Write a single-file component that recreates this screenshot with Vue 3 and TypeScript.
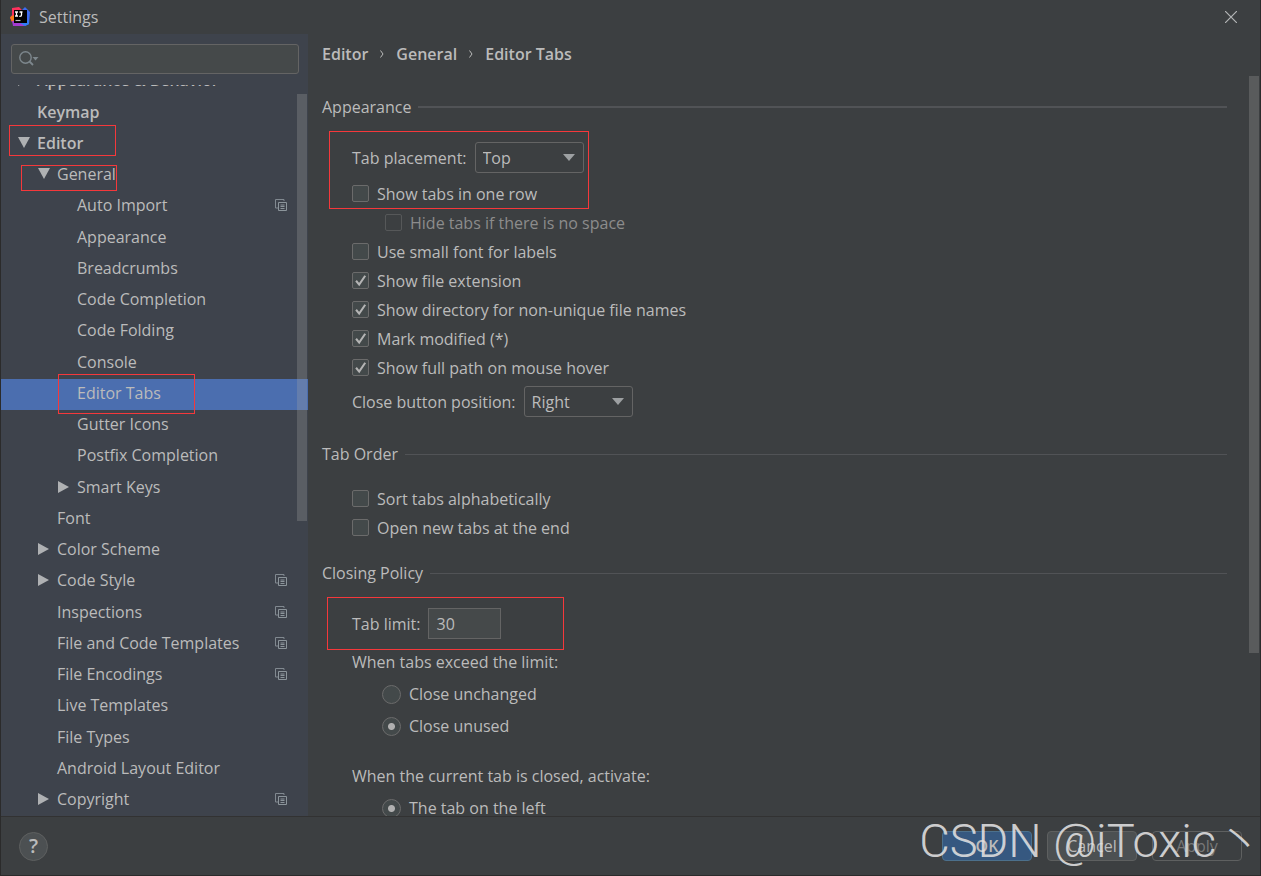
<script setup lang="ts">
import { ref } from 'vue'

interface TreeItem {
  label: string
  level: number
  state?: 'open' | 'closed'
  bold?: boolean
  project?: boolean
}

const tree: TreeItem[] = [
  { label: 'Appearance & Behavior', level: 0, state: 'closed', bold: true },
  { label: 'Keymap', level: 0, bold: true },
  { label: 'Editor', level: 0, state: 'open', bold: true },
  { label: 'General', level: 1, state: 'open' },
  { label: 'Auto Import', level: 2, project: true },
  { label: 'Appearance', level: 2 },
  { label: 'Breadcrumbs', level: 2 },
  { label: 'Code Completion', level: 2 },
  { label: 'Code Folding', level: 2 },
  { label: 'Console', level: 2 },
  { label: 'Editor Tabs', level: 2 },
  { label: 'Gutter Icons', level: 2 },
  { label: 'Postfix Completion', level: 2 },
  { label: 'Smart Keys', level: 2, state: 'closed' },
  { label: 'Font', level: 1 },
  { label: 'Color Scheme', level: 1, state: 'closed' },
  { label: 'Code Style', level: 1, state: 'closed', project: true },
  { label: 'Inspections', level: 1, project: true },
  { label: 'File and Code Templates', level: 1, project: true },
  { label: 'File Encodings', level: 1, project: true },
  { label: 'Live Templates', level: 1 },
  { label: 'File Types', level: 1 },
  { label: 'Android Layout Editor', level: 1 },
  { label: 'Copyright', level: 1, state: 'closed', project: true },
]

const selected = ref('Editor Tabs')
const query = ref('')
const placement = ref('Top')
const closePosition = ref('Right')
const tabLimit = ref('30')
const exceed = ref('unused')
const activate = ref('left')

const appearance = ref([
  { label: 'Show tabs in one row', checked: false, disabled: false },
  { label: 'Hide tabs if there is no space', checked: false, disabled: true },
  { label: 'Use small font for labels', checked: false, disabled: false },
  { label: 'Show file extension', checked: true, disabled: false },
  { label: 'Show directory for non-unique file names', checked: true, disabled: false },
  { label: 'Mark modified (*)', checked: true, disabled: false },
  { label: 'Show full path on mouse hover', checked: true, disabled: false },
])

const order = ref([
  { label: 'Sort tabs alphabetically', checked: false },
  { label: 'Open new tabs at the end', checked: false },
])
</script>

<template>
  <div class="window">
    <header class="titlebar">
      <svg class="logo" viewBox="0 0 20 20" aria-hidden="true">
        <path d="M2 1 9 0 14 5 7 14 2 15 0 11 2 8Z" fill="#fe315d" />
        <path d="M0 10 4 8 6 13 2 15Z" fill="#f97a12" />
        <path d="M12 3 15 0 20 5 19 17 15 19 9 16Z" fill="#3b6bf0" />
        <path d="M2 14 8 13 17 17 14 19 3 19Z" fill="#a33bd0" />
        <path d="M10 16 18 13 19 17 15 19Z" fill="#2f7df5" />
        <rect x="4" y="3" width="13" height="13" fill="#000" />
        <path d="M5 5h3M6.500 5v4M5 9h3M9.500 5h3M11.500 5v3q0 1.300-1.500 1.300h-.7" fill="none" stroke="#fff" stroke-width="1.300" />
        <path d="M5.500 13.500h5" stroke="#bbb" stroke-width="1.200" />
      </svg>
      <h1>Settings</h1>
      <button class="close" type="button" aria-label="Close">
        <svg viewBox="0 0 12 12"><path d="M0 0 12 12M12 0 0 12" stroke="#b4b6b7" stroke-width="1.200" /></svg>
      </button>
    </header>

    <div class="body">
      <aside class="sidebar">
        <div class="search">
          <svg viewBox="0 0 22 18" aria-hidden="true">
            <circle cx="7.500" cy="7.500" r="5.700" fill="none" stroke="#7d878d" stroke-width="1.400" />
            <path d="m11.500 11.500 3.500 3.500" stroke="#7d878d" stroke-width="1.800" />
            <path d="M14.500 7h6l-3 3.500Z" fill="#7d878d" />
          </svg>
          <input v-model="query" type="text" aria-label="Search settings" />
        </div>
        <nav class="tree" aria-label="Settings">
          <ul>
            <li
              v-for="item in tree"
              :key="item.label + item.level"
              :class="['level-' + item.level, { bold: item.bold, selected: item.label === selected }]"
            >
              <button type="button" @click="selected = item.label">
                <svg class="arrow" viewBox="0 0 12 12" aria-hidden="true">
                  <path v-if="item.state === 'open'" d="M0 0h12L6 11Z" fill="#afb1b3" />
                  <path v-else-if="item.state === 'closed'" d="M0 0v12l11-6Z" fill="#afb1b3" />
                </svg>
                <span>{{ item.label }}</span>
                <svg v-if="item.project" class="project" viewBox="0 0 12 12" aria-hidden="true">
                  <path d="M9 2V.5H.5V9H3" fill="none" stroke="#818990" />
                  <path d="M3.500 3.500h8v8h-8ZM5.500 6h4M5.500 7.500h4M5.500 9.500h4" fill="none" stroke="#8c959b" />
                </svg>
              </button>
            </li>
          </ul>
          <i class="thumb"></i>
        </nav>
      </aside>

      <main class="content">
        <nav class="crumbs" aria-label="Breadcrumb">
          <a href="#editor">Editor</a>
          <svg viewBox="0 0 4 8" aria-hidden="true"><path d="m.5.5 2.500 3.500L.5 7.500" /></svg>
          <a href="#general">General</a>
          <svg viewBox="0 0 4 8" aria-hidden="true"><path d="m.5.5 2.500 3.500L.5 7.500" /></svg>
          <a href="#editor-tabs">Editor Tabs</a>
        </nav>

        <section class="appearance">
          <h2>Appearance</h2>
          <div class="field">
            <label for="placement">Tab placement:</label>
            <div class="combo">
              <select id="placement" v-model="placement">
                <option>Top</option>
                <option>Bottom</option>
                <option>Left</option>
                <option>Right</option>
              </select>
              <svg viewBox="0 0 12 7" aria-hidden="true"><path d="M0 0h12L6 7Z" fill="#9da0a2" /></svg>
            </div>
          </div>
          <div class="checks">
            <label v-for="option in appearance" :key="option.label" class="check" :class="{ disabled: option.disabled }">
              <input v-model="option.checked" type="checkbox" :disabled="option.disabled" />
              <svg v-if="option.checked" viewBox="0 0 18 18" aria-hidden="true"><path d="m4.300 9.300 3.300 4L14 4" /></svg>
              <span>{{ option.label }}</span>
            </label>
          </div>
          <div class="field">
            <label for="close-position">Close button position:</label>
            <div class="combo">
              <select id="close-position" v-model="closePosition">
                <option>Right</option>
                <option>Left</option>
                <option>None</option>
              </select>
              <svg viewBox="0 0 12 7" aria-hidden="true"><path d="M0 0h12L6 7Z" fill="#9da0a2" /></svg>
            </div>
          </div>
        </section>

        <section class="order">
          <h2>Tab Order</h2>
          <div class="checks">
            <label v-for="option in order" :key="option.label" class="check">
              <input v-model="option.checked" type="checkbox" />
              <svg v-if="option.checked" viewBox="0 0 18 18" aria-hidden="true"><path d="m4.300 9.300 3.300 4L14 4" /></svg>
              <span>{{ option.label }}</span>
            </label>
          </div>
        </section>

        <section class="closing">
          <h2>Closing Policy</h2>
          <div class="field">
            <label for="limit">Tab limit:</label>
            <input id="limit" v-model="tabLimit" class="limit" type="text" />
          </div>
          <fieldset>
            <legend>When tabs exceed the limit:</legend>
            <label class="radio"><input v-model="exceed" type="radio" name="exceed" value="unchanged" />Close unchanged</label>
            <label class="radio"><input v-model="exceed" type="radio" name="exceed" value="unused" />Close unused</label>
          </fieldset>
          <fieldset>
            <legend>When the current tab is closed, activate:</legend>
            <label class="radio"><input v-model="activate" type="radio" name="activate" value="left" />The tab on the left</label>
          </fieldset>
        </section>
        <i class="thumb"></i>
      </main>
    </div>

    <footer class="footer">
      <button class="help" type="button" aria-label="Help">?</button>
      <button class="action primary" type="button">OK</button>
      <button class="action" type="button">Cancel</button>
      <button class="action inactive" type="button" disabled>Apply</button>
    </footer>

    <i class="mark mark-editor"></i>
    <i class="mark mark-general"></i>
    <i class="mark mark-tabs"></i>
    <i class="mark mark-placement"></i>
    <i class="mark mark-limit"></i>
    <div class="watermark">CSDN @iToxic丶</div>
  </div>
</template>

<style>
body {
  margin: 0;
  background: #3c3f41;
}
</style>

<style scoped>
* {
  box-sizing: border-box;
}

.window {
  position: relative;
  display: flex;
  flex-direction: column;
  height: 100vh;
  overflow: hidden;
  border: solid #2b2b2b;
  border-width: 0 1px 1px;
  background: #3c3f41;
  color: #bbb;
  font: 16px/20px "Open Sans", "Noto Sans", sans-serif;
}

button,
input,
select {
  margin: 0;
  padding: 0;
  border: 0;
  background: none;
  color: inherit;
  font: inherit;
}

.titlebar {
  display: flex;
  flex: none;
  align-items: center;
  height: 34px;
  padding: 0 23px 0 9px;
}

.logo {
  width: 20px;
  height: 20px;
}

h1 {
  flex: 1;
  margin: 0 0 0 9px;
  font-size: 16px;
  font-weight: 400;
}

.close {
  display: flex;
  padding: 0;
}

.close svg {
  width: 12px;
  height: 12px;
}

.body {
  display: flex;
  flex: 1;
  min-height: 0;
}

.sidebar {
  display: flex;
  flex: none;
  flex-direction: column;
  width: 307px;
  background: #3e434c;
}

.search {
  display: flex;
  flex: none;
  align-items: center;
  height: 30px;
  margin: 10px 9px 11px 10px;
  padding-left: 6px;
  border: 1px solid #646464;
  border-radius: 3px;
  background: #45494a;
}

.search svg {
  width: 22px;
  height: 18px;
}

.search input {
  flex: 1;
  outline: none;
}

.tree {
  position: relative;
  flex: 1;
  min-height: 0;
  overflow: hidden;
}

ul {
  margin: -19px 0 0;
  padding: 0;
  list-style: none;
}

li {
  height: 31px;
}

li:nth-child(4n + 1) {
  height: 32px;
}

li button {
  display: flex;
  align-items: center;
  width: 100%;
  height: 31px;
  padding: 0 21px 3px 17px;
  text-align: left;
}

.level-1 button {
  padding-left: 37px;
}

.level-2 button {
  padding-left: 57px;
}

li span {
  flex: 1;
  margin-left: 7px;
  white-space: nowrap;
}

.bold {
  font-weight: 600;
}

.selected {
  background: #4b6eaf;
}

.arrow,
.project {
  flex: none;
  width: 12px;
  height: 12px;
}

.thumb {
  position: absolute;
  top: 9px;
  right: 1px;
  width: 10px;
  height: 427px;
  background: rgba(166, 166, 166, 0.28);
}

.content {
  position: relative;
  flex: 1;
  min-width: 0;
  overflow: hidden;
  padding: 0 33px 0 14px;
}

.content .thumb {
  top: 42px;
  height: 577px;
}

.crumbs {
  display: flex;
  align-items: center;
  height: 40px;
  font-weight: 600;
}

.crumbs a {
  color: inherit;
  text-decoration: none;
}

.crumbs svg {
  width: 4px;
  height: 8px;
  margin: 0 12px;
  fill: none;
  stroke: #bbb;
}

section {
  margin-top: 18px;
}

h2 {
  display: flex;
  align-items: center;
  height: 30px;
  margin: 0;
  font-size: 16px;
  font-weight: 400;
}

h2::after {
  content: "";
  flex: 1;
  height: 1px;
  margin-left: 7px;
  background: #515356;
}

.appearance h2::after {
  height: 2px;
}

.field {
  display: flex;
  align-items: center;
  gap: 8px;
  height: 31px;
  padding-left: 30px;
}

h2 + .field {
  margin-top: 20px;
}

.combo {
  position: relative;
}

select {
  appearance: none;
  display: block;
  width: 109px;
  height: 31px;
  padding-left: 7px;
  border: 1px solid #646464;
  border-radius: 3px;
}

.combo svg {
  position: absolute;
  top: 12px;
  right: 9px;
  width: 12px;
  height: 7px;
  pointer-events: none;
}

.checks {
  padding: 6px 0 4px 30px;
}

.check {
  position: relative;
  display: flex;
  align-items: center;
  gap: 8px;
  height: 29px;
}

.check.disabled {
  margin-left: 33px;
  color: #8c8c8c;
}

.check input {
  appearance: none;
  width: 17px;
  height: 17px;
  border: 1px solid #6b6b6b;
  border-radius: 2px;
  background: #43494a;
}

.check.disabled input {
  border-color: #565859;
  background: none;
}

.check svg {
  position: absolute;
  left: 0;
  width: 17px;
  height: 17px;
  fill: none;
  stroke: #b4b4b4;
  stroke-width: 2.2;
  pointer-events: none;
}

.order {
  margin-top: 22px;
}

.order .checks {
  padding-top: 15px;
  padding-bottom: 0;
}

.closing {
  margin-top: 16px;
}

.limit {
  width: 73px;
  height: 31px;
  padding-left: 7px;
  border: 1px solid #646464;
  background: #45494a;
}

fieldset {
  margin: 7px 0 18px;
  padding: 0 0 0 30px;
  border: 0;
}

legend {
  padding: 0;
  line-height: 32px;
}

.radio {
  display: flex;
  align-items: center;
  gap: 8px;
  height: 32px;
  padding-left: 30px;
}

.radio input {
  appearance: none;
  width: 19px;
  height: 19px;
  border: 1px solid #6b6b6b;
  border-radius: 50%;
  background: #43494a;
}

.radio input:checked {
  background: radial-gradient(circle, #b0b0b0 3px, #43494a 4px);
}

.footer {
  display: flex;
  flex: none;
  align-items: center;
  gap: 15px;
  height: 59px;
  padding: 0 18px;
  border-top: 1px solid #323232;
}

.help {
  width: 29px;
  height: 29px;
  margin-right: auto;
  border: 1px solid #5e6060;
  border-radius: 50%;
  background: #4c5052;
  font-size: 20px;
  font-weight: 600;
}

.action {
  width: 90px;
  height: 30px;
  border: 1px solid #5e6060;
  border-radius: 4px;
  background: #4c5052;
}

.primary {
  border-color: #4c708c;
  background: #365880;
  font-weight: 600;
}

.inactive {
  background: none;
  color: #777;
}

.mark {
  position: absolute;
  border: 1px solid #f5383b;
  pointer-events: none;
}

.mark-editor {
  left: 8px;
  top: 125px;
  width: 107px;
  height: 31px;
}

.mark-general {
  left: 20px;
  top: 165px;
  width: 96px;
  height: 26px;
}

.mark-tabs {
  left: 57px;
  top: 374px;
  width: 137px;
  height: 40px;
}

.mark-placement {
  left: 328px;
  top: 131px;
  width: 260px;
  height: 78px;
}

.mark-limit {
  left: 326px;
  top: 597px;
  width: 237px;
  height: 53px;
}

.watermark {
  position: absolute;
  right: -3px;
  bottom: 4px;
  color: rgba(225, 225, 225, 0.9);
  font: 300 47px/60px Roboto, "Noto Sans CJK SC", sans-serif;
  white-space: nowrap;
  pointer-events: none;
}
</style>
